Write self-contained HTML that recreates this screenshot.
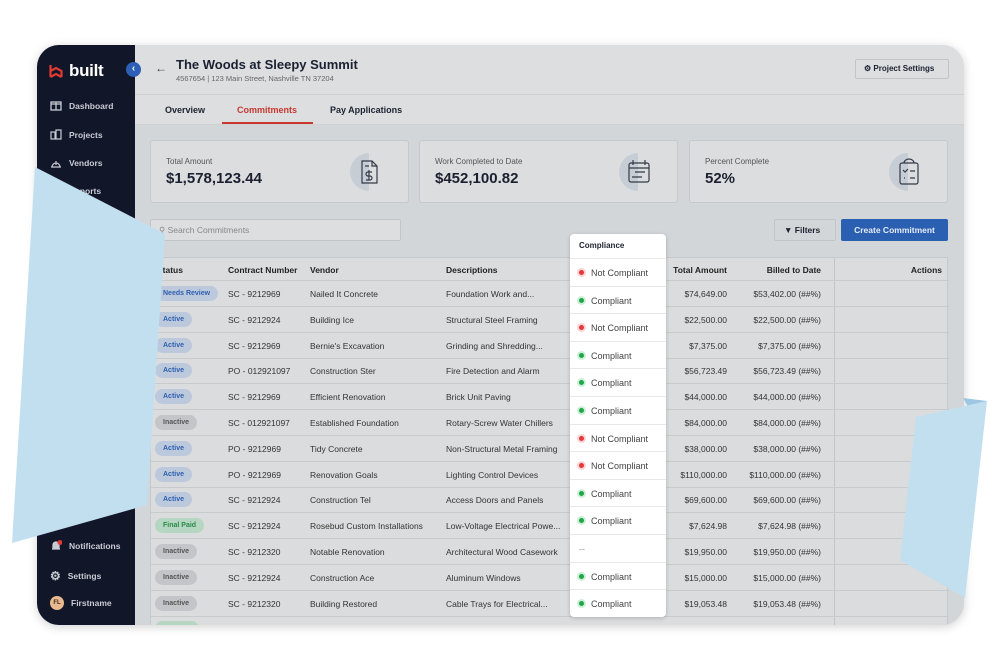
<!DOCTYPE html>
<html><head><meta charset="utf-8"><style>
*{box-sizing:border-box;margin:0;padding:0}
body{width:1000px;height:671px;background:#fff;position:relative;overflow:hidden;font-family:"Liberation Sans",Arial,sans-serif;color:#1d2230}
.card{position:absolute;left:37px;top:45px;width:927px;height:580px;border-radius:22px;overflow:hidden;background:#d3d6d9;box-shadow:0 2px 10px rgba(0,0,0,.18)}
.side{position:absolute;left:0;top:0;width:98px;height:580px;background:#121629}
.nav{position:absolute;left:13px;font-size:8.5px;font-weight:bold;color:#c9ccd4;display:flex;align-items:center;gap:7px}
.hdr{position:absolute;left:98px;top:0;right:0;height:80px;background:#dddee0;border-bottom:1px solid #cfd1d4}
.a{position:absolute}
.stat{position:absolute;top:95px;height:63px;width:259px;background:#dcdddf;border:1px solid #c5c8cc;border-radius:3px}
.stat .l{position:absolute;left:15px;top:16px;font-size:8px;color:#555}
.stat .v{position:absolute;left:15px;top:29px;font-size:15px;font-weight:bold;color:#1b2030}
.stat .c{position:absolute;right:20px;top:12px;width:38px;height:38px;border-radius:50%;background:linear-gradient(90deg,#c7cdd5 50%,transparent 50%)}
.tbl{position:absolute;left:113px;top:212px;width:798px;height:380px;background:#dbdcdd;border:1px solid #c5c8cc}
.row{position:absolute;left:0;width:798px;height:26px;border-bottom:1px solid #c8cacd;font-size:8.5px;color:#333}
.row span{position:absolute;top:8px;white-space:nowrap}
.pill{position:absolute;top:5px;left:4px;height:15px;border-radius:8px;font-size:7px;font-weight:bold;line-height:15px;padding:0 8px}
.act{background:#bcc9dc;color:#2e5fb0}.ina{background:#c4c5c9;color:#555}.fp{background:#b5d6c0;color:#2a8a4a}
.pop{position:absolute;left:533px;top:189px;width:96px;height:383px;background:#fff;border-radius:4px;box-shadow:0 1px 4px rgba(0,0,0,.2)}
.pr{position:absolute;left:0;width:96px;height:28px;border-top:1px solid #e8e8e8;font-size:9px;color:#444;padding:9px 0 0 9px}
.dot{display:inline-block;width:5px;height:5px;border-radius:50%;margin-right:7px;vertical-align:1px}
.r{background:#e5383b;box-shadow:0 0 0 2px #fbd5d5}.g{background:#1fa64a;box-shadow:0 0 0 2px #cdeed7}
</style></head><body>
<div class="card">
 <div class="side">
  <div class="a" style="left:12px;top:16px;display:flex;align-items:center;gap:6px"><svg width="14" height="14" viewBox="0 0 14 14"><path d="M1.5 1v12M1.5 7l5.5-3 5.5 3v6M1.5 13l5.5-3 5.5 3" stroke="#e03a32" stroke-width="2.2" fill="none"/></svg><span style="color:#fff;font-size:17px;font-weight:bold;letter-spacing:-.3px">built</span></div>
  <div class="nav" style="top:56px"><svg width="12" height="10"><rect x="1" y="1" width="10" height="8" fill="none" stroke="#c9ccd4" stroke-width="1.3"/><path d="M6 1v8M1 3h10" stroke="#c9ccd4" stroke-width="1.3"/></svg>Dashboard</div>
  <div class="nav" style="top:84px"><svg width="12" height="11"><rect x="1" y="3" width="4" height="7" fill="none" stroke="#c9ccd4" stroke-width="1.2"/><rect x="6" y="1" width="5" height="9" fill="none" stroke="#c9ccd4" stroke-width="1.2"/></svg>Projects</div>
  <div class="nav" style="top:113px"><svg width="12" height="10"><path d="M1 9h10M2 9a4 4 0 0 1 8 0M6 3v4" stroke="#c9ccd4" stroke-width="1.2" fill="none"/></svg>Vendors</div>
  <div class="nav" style="top:141px"><span style="width:12px"></span>Reports</div>
  <div class="nav" style="top:495px"><svg width="12" height="11"><path d="M3 9V5a3 3 0 0 1 6 0v4zM2 9h8" stroke="#c9ccd4" stroke-width="1.3" fill="#c9ccd4"/><circle cx="10" cy="2.5" r="2.5" fill="#e03a32"/></svg>Notifications</div>
  <div class="nav" style="top:524px"><span style="font-size:12px">⚙</span>Settings</div>
  <div class="nav" style="top:551px"><span style="width:14px;height:14px;border-radius:50%;background:#e8b98f;color:#3a2a1a;font-size:6px;text-align:center;line-height:14px">FL</span>Firstname</div>
 </div>
 <div class="hdr">
  <div class="a" style="left:20px;top:16px;font-size:12px;color:#444">←</div>
  <div class="a" style="left:41px;top:12px;font-size:13px;font-weight:bold;color:#1b2030">The Woods at Sleepy Summit</div>
  <div class="a" style="left:41px;top:29px;font-size:7.5px;color:#666">4567654 | 123 Main Street, Nashville TN 37204</div>
  <div class="a" style="left:720px;top:14px;width:94px;height:20px;border:1px solid #c2c4c8;border-radius:2px;font-size:8px;font-weight:bold;line-height:18px;padding-left:8px;color:#1b2030">⚙ Project Settings</div>
  <div class="a" style="left:0;right:0;top:49px;border-top:1px solid #cdd0d3"></div>
  <div class="a" style="left:30px;top:60px;font-size:9px;font-weight:bold">Overview</div>
  <div class="a" style="left:102px;top:60px;font-size:9px;font-weight:bold;color:#c8382e">Commitments</div>
  <div class="a" style="left:87px;top:77px;width:91px;height:2px;background:#c8382e"></div>
  <div class="a" style="left:195px;top:60px;font-size:9px;font-weight:bold">Pay Applications</div>
 </div>
 <div class="a" style="left:89px;top:17px;width:15px;height:15px;border-radius:50%;background:#2c5fb5;color:#fff;font-size:10px;text-align:center;line-height:14px;font-weight:bold;z-index:3">‹</div>
 <div class="stat" style="left:113px"><div class="l">Total Amount</div><div class="v">$1,578,123.44</div><div class="c"><svg width="38" height="38"><path d="M12 8h10l5 5v17H12z M22 8v5h5M15 13h4M19 17v10M22 19h-4a2 2 0 0 0 0 4h2a2 2 0 0 1 0 4h-4" fill="none" stroke="#333a48" stroke-width="1.2"/></svg></div></div>
 <div class="stat" style="left:382px"><div class="l">Work Completed to Date</div><div class="v">$452,100.82</div><div class="c"><svg width="38" height="38"><rect x="10" y="10" width="20" height="19" rx="2" fill="none" stroke="#333a48" stroke-width="1.2"/><path d="M14 7v5M26 7v5M10 15h20M16 19h10M13 24h10" stroke="#333a48" stroke-width="1.2"/></svg></div></div>
 <div class="stat" style="left:652px"><div class="l">Percent Complete</div><div class="v">52%</div><div class="c"><svg width="38" height="38"><rect x="11" y="10" width="18" height="21" rx="2" fill="none" stroke="#333a48" stroke-width="1.2"/><path d="M15 10a5 4 0 0 1 10 0M14 17l2 2 3-3M21 18h5M15 25h1M21 25h5" fill="none" stroke="#333a48" stroke-width="1.2"/></svg></div></div>
 <div class="a" style="left:113px;top:174px;width:251px;height:22px;border:1px solid #c2c4c8;border-radius:2px;background:#dddee0;font-size:8.5px;color:#888;line-height:20px;padding-left:8px">⚲ Search Commitments</div>
 <div class="a" style="left:737px;top:174px;width:62px;height:22px;border:1px solid #c2c4c8;border-radius:2px;font-size:8.5px;font-weight:bold;line-height:20px;padding-left:9px">▼ Filters</div>
 <div class="a" style="left:804px;top:174px;width:107px;height:22px;border-radius:2px;background:#2b5fb2;color:#e6ecf7;font-size:8.5px;font-weight:bold;line-height:22px;text-align:center">Create Commitment</div>
 <div class="tbl">
  <div class="a" style="left:683px;top:0;width:1px;height:380px;background:#c3c5c8"></div>
  <div class="row" style="top:0;height:23px;font-weight:bold;color:#222"><span style="left:6px;top:7px">Status</span><span style="left:77px;top:7px">Contract Number</span><span style="left:159px;top:7px">Vendor</span><span style="left:295px;top:7px">Descriptions</span><span style="right:222px;top:7px">Total Amount</span><span style="right:128px;top:7px">Billed to Date</span><span style="right:7px;top:7px">Actions</span></div>
  <div id="rows"></div>
 </div>
 <div class="pop">
  <div style="font-size:8px;font-weight:bold;padding:7px 9px;height:24px">Compliance</div>
  <div id="pops"></div>
 </div>
</div>
<svg class="a" style="left:0;top:0" width="1000" height="671"><polygon points="35,167 165,234 147,505 12,543" fill="#c2dff0"/><polygon points="963,398 987,401 970,410" fill="#9cc6e2"/><polygon points="916,417 987,401 965,598 900,560" fill="#c2dff0"/></svg>
<script>
var d=[["Needs Review","act","SC - 9212969","Nailed It Concrete","Foundation Work and...","$74,649.00","$53,402.00"],
["Active","act","SC - 9212924","Building Ice","Structural Steel Framing","$22,500.00","$22,500.00"],
["Active","act","SC - 9212969","Bernie's Excavation","Grinding and Shredding...","$7,375.00","$7,375.00"],
["Active","act","PO - 012921097","Construction Ster","Fire Detection and Alarm","$56,723.49","$56,723.49"],
["Active","act","SC - 9212969","Efficient Renovation","Brick Unit Paving","$44,000.00","$44,000.00"],
["Inactive","ina","SC - 012921097","Established Foundation","Rotary-Screw Water Chillers","$84,000.00","$84,000.00"],
["Active","act","PO - 9212969","Tidy Concrete","Non-Structural Metal Framing","$38,000.00","$38,000.00"],
["Active","act","PO - 9212969","Renovation Goals","Lighting Control Devices","$110,000.00","$110,000.00"],
["Active","act","SC - 9212924","Construction Tel","Access Doors and Panels","$69,600.00","$69,600.00"],
["Final Paid","fp","SC - 9212924","Rosebud Custom Installations","Low-Voltage Electrical Powe...","$7,624.98","$7,624.98"],
["Inactive","ina","SC - 9212320","Notable Renovation","Architectural Wood Casework","$19,950.00","$19,950.00"],
["Inactive","ina","SC - 9212924","Construction Ace","Aluminum Windows","$15,000.00","$15,000.00"],
["Inactive","ina","SC - 9212320","Building Restored","Cable Trays for Electrical...","$19,053.48","$19,053.48"],
["","fp","","","","",""]];
var h="";d.forEach(function(r,i){var t=23+i*25.8;h+='<div class="row" style="top:'+t+'px"><div class="pill '+r[1]+'"'+(r[0]?'':' style="width:44px"')+'>'+r[0]+'</div><span style="left:77px">'+r[2]+'</span><span style="left:159px">'+r[3]+'</span><span style="left:295px">'+r[4]+'</span><span style="right:222px">'+r[5]+'</span><span style="right:128px">'+(r[6]?r[6]+' (##%)':'')+'</span></div>'});
document.getElementById("rows").innerHTML=h;
var c="rgrgggrrgg-gg",p="";for(var i=0;i<13;i++){var k=c[i];p+='<div class="pr" style="top:'+(24+i*27.6)+'px">'+(k=='-'?'<span style="color:#999">--</span>':'<span class="dot '+k+'"></span>'+(k=='r'?'Not Compliant':'Compliant'))+'</div>'}
document.getElementById("pops").innerHTML=p;
</script>
</body></html>
